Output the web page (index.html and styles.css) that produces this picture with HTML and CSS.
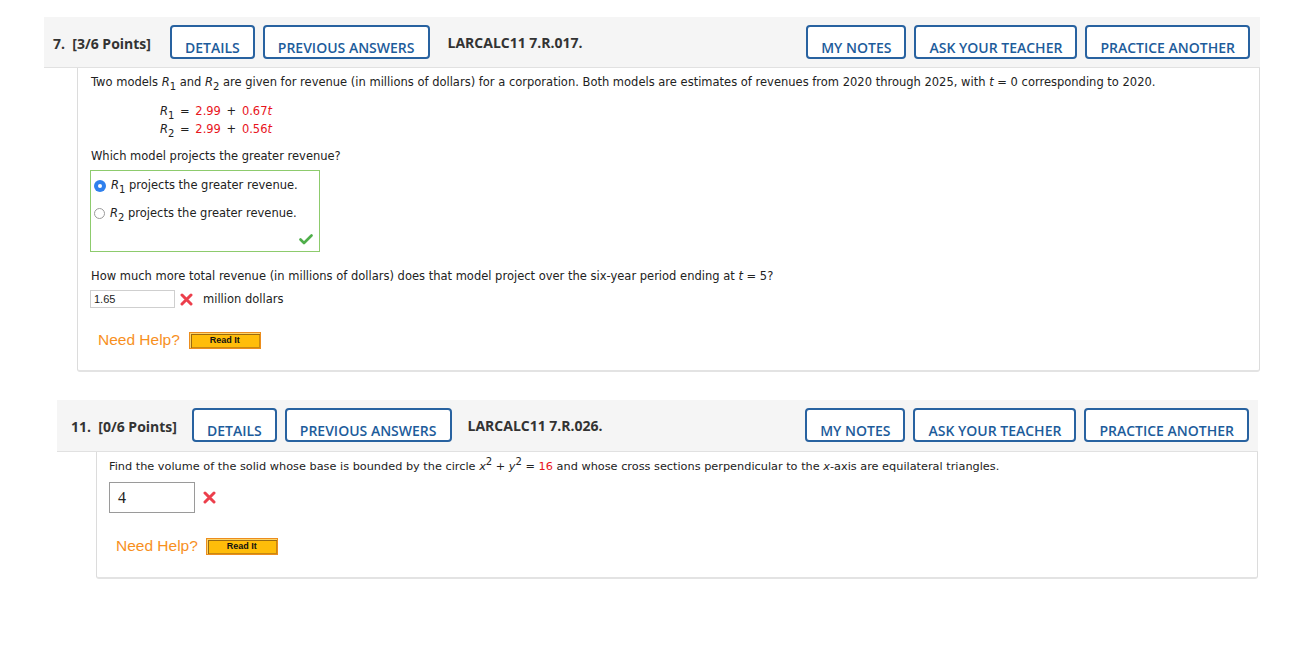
FILE: index.html
```html
<!DOCTYPE html>
<html>
<head>
<meta charset="utf-8">
<link rel="stylesheet" href="styles.css">
</head>
<body>
<div class="question q7">
  <div class="qhead">
    <span class="qlabel">7.&nbsp;&nbsp;[3/6 Points]</span>
    <span class="btn">DETAILS</span>
    <span class="btn">PREVIOUS ANSWERS</span>
    <span class="qcode">LARCALC11 7.R.017.</span>
    <span class="spacer"></span>
    <span class="btn">MY NOTES</span>
    <span class="btn">ASK YOUR TEACHER</span>
    <span class="btn">PRACTICE ANOTHER</span>
  </div>
  <div class="qbody body7">
    <p class="line">Two models <i>R</i><sub>1</sub> and <i>R</i><sub>2</sub> are given for revenue (in millions of dollars) for a corporation. Both models are estimates of revenues from 2020 through 2025, with <i>t</i> = 0 corresponding to 2020.</p>
    <div class="formulas">
      <div class="fl"><i>R</i><sub>1</sub> = <span class="red">2.99</span> + <span class="red">0.67<i>t</i></span></div>
      <div class="fl"><i>R</i><sub>2</sub> = <span class="red">2.99</span> + <span class="red">0.56<i>t</i></span></div>
    </div>
    <p class="line q-which">Which model projects the greater revenue?</p>
    <div class="choices">
      <div class="choice"><span class="radio on"></span><span><i>R</i><sub>1</sub> projects the greater revenue.</span></div>
      <div class="choice"><span class="radio"></span><span><i>R</i><sub>2</sub> projects the greater revenue.</span></div>
      <svg class="check" width="14" height="11" viewBox="0 0 14 11"><path d="M1.5 5.5 L5 9 L12.5 1.5" fill="none" stroke="#4fae4a" stroke-width="2.6" stroke-linecap="round" stroke-linejoin="round"/></svg>
    </div>
    <p class="line q-how">How much more total revenue (in millions of dollars) does that model project over the six-year period ending at <i>t</i> = 5?</p>
    <div class="answer-row">
      <span class="input small">1.65</span>
      <svg class="xmark" width="13" height="13" viewBox="0 0 13 13"><path d="M2 2 L11 11 M11 2 L2 11" stroke="#ec3f4c" stroke-width="3" stroke-linecap="round"/></svg>
      <span class="unit">million dollars</span>
    </div>
    <div class="help help7">
      <span class="need">Need Help?</span>
      <span class="readit">Read It</span>
    </div>
  </div>
</div>

<div class="question q11">
  <div class="qhead">
    <span class="qlabel">11.&nbsp;&nbsp;[0/6 Points]</span>
    <span class="btn">DETAILS</span>
    <span class="btn">PREVIOUS ANSWERS</span>
    <span class="qcode">LARCALC11 7.R.026.</span>
    <span class="spacer"></span>
    <span class="btn">MY NOTES</span>
    <span class="btn">ASK YOUR TEACHER</span>
    <span class="btn">PRACTICE ANOTHER</span>
  </div>
  <div class="qbody body11">
    <p class="line">Find the volume of the solid whose base is bounded by the circle <i>x</i><sup>2</sup> + <i>y</i><sup>2</sup> = <span class="red">16</span> and whose cross sections perpendicular to the <i>x</i>-axis are equilateral triangles.</p>
    <div class="answer-row row11">
      <span class="input big">4</span>
      <svg class="xmark" width="13" height="13" viewBox="0 0 13 13"><path d="M2 2 L11 11 M11 2 L2 11" stroke="#ec3f4c" stroke-width="3" stroke-linecap="round"/></svg>
    </div>
    <div class="help help11">
      <span class="need">Need Help?</span>
      <span class="readit">Read It</span>
    </div>
  </div>
</div>
</body>
</html>
```

FILE: styles.css
```css
html, body {
  margin: 0;
  padding: 0;
  background: #ffffff;
}

body {
  font-family: "DejaVu Sans", Verdana, sans-serif;
  font-size: 11px;
  color: #222;
}

.question {
  display: flex;
  flex-direction: column;
}

.q7 {
  margin: 17px 0 0 44px;
  width: 1216px;
}

.q11 {
  margin: 28px 0 0 57px;
  width: 1201px;
}

.qhead {
  display: flex;
  align-items: center;
  gap: 8px;
  height: 51px;
  box-sizing: border-box;
  padding: 8px 10px 9px 9px;
  background: #f5f5f5;
  border-bottom: 1px solid #e1e1e1;
  font-family: "Open Sans", sans-serif;
}

.q11 .qhead {
  height: 52px;
  padding: 8px 9px 9px 14px;
}

.qlabel {
  font-weight: 700;
  font-size: 14px;
  color: #333;
  margin-right: 11px;
  padding-top: 3px;
}

.q11 .qlabel {
  margin-right: 7px;
}

.qcode {
  font-weight: 700;
  font-size: 14px;
  color: #333;
  margin-left: 10px;
  padding-top: 1px;
}

.q11 .qcode {
  margin-left: 8px;
}

.spacer {
  flex: 1;
}

.btn {
  display: flex;
  align-items: flex-end;
  height: 34px;
  box-sizing: border-box;
  padding: 0 13px 0;
  border: 2px solid #2862a0;
  border-radius: 4px;
  background: #fff;
  color: #1d5c9b;
  font-size: 14px;
  font-weight: 600;
  line-height: 18px;
}

.qbody {
  background: #fff;
  border: 1px solid #dcdcdc;
  border-top: none;
  border-bottom: 2px solid #e3e3e3;
  border-radius: 0 0 3px 3px;
  display: flex;
  flex-direction: column;
  align-items: flex-start;
}

.body7 {
  margin-left: 33px;
  height: 304px;
  box-sizing: border-box;
  padding: 7px 0 0 13px;
  font-size: 11.5px;
}

.body11 {
  margin-left: 39px;
  height: 127px;
  box-sizing: border-box;
  padding: 7px 0 0 12px;
  font-size: 11.3px;
}

.line {
  margin: 0;
  line-height: 15px;
  white-space: nowrap;
}

sub, sup {
  font-size: 10px;
  line-height: 0;
}

sub {
  vertical-align: -4px;
}

sup {
  vertical-align: 5px;
}

.red {
  color: #e8141c;
}

.formulas {
  margin: 12px 0 0 69px;
  display: flex;
  flex-direction: column;
}

.fl {
  line-height: 18px;
  word-spacing: 2px;
}

.q-which {
  margin-top: 11px;
}

.choices {
  position: relative;
  margin: 6px 0 0 -1px;
  width: 230px;
  height: 82px;
  box-sizing: border-box;
  border: 1px solid #8dcb6d;
  padding: 7px 0 0 3px;
  display: flex;
  flex-direction: column;
  gap: 13px;
}

.choice {
  display: flex;
  align-items: center;
  gap: 5px;
  line-height: 15px;
}

.radio {
  width: 11px;
  height: 11px;
  box-sizing: border-box;
  border-radius: 50%;
  border: 1px solid #9a9a9a;
  background: #fff;
  display: inline-flex;
  align-items: center;
  justify-content: center;
}

.radio.on {
  width: 12px;
  height: 12px;
  border: none;
  background: #2f80ed;
}

.radio.on::after {
  content: "";
  width: 4px;
  height: 4px;
  border-radius: 50%;
  background: #fff;
}

.check {
  position: absolute;
  right: 6px;
  bottom: 6px;
}

.q-how {
  margin-top: 17px;
}

.answer-row {
  display: flex;
  align-items: center;
  margin: 6px 0 0 -1px;
}

.input {
  display: flex;
  align-items: center;
  box-sizing: border-box;
  background: #fff;
}

.input.small {
  width: 85px;
  height: 18px;
  border: 1px solid #cfcfcf;
  padding-left: 3px;
  font-family: "Liberation Sans", Arial, sans-serif;
  font-size: 11px;
  color: #222;
}

.answer-row .xmark {
  margin-left: 5px;
}

.unit {
  margin-left: 10px;
}

.help {
  display: flex;
  align-items: center;
  gap: 9px;
}

.help7 {
  margin: 23px 0 0 7px;
}

.help11 {
  margin: 24px 0 0 7px;
  gap: 8px;
}

.need {
  font-family: "Liberation Sans", Arial, sans-serif;
  font-size: 15.5px;
  color: #f7901e;
}

.readit {
  display: flex;
  align-items: center;
  justify-content: center;
  width: 72px;
  height: 17px;
  box-sizing: border-box;
  background: #ffbd0a;
  border: 1px solid #ec8d1d;
  box-shadow: inset 1px 1px 0 #fbd46a, inset 2px 2px 0 #9a6a10, inset -1px -1px 0 #c98a10;
  font-family: "Liberation Sans", Arial, sans-serif;
  font-size: 9px;
  font-weight: 700;
  color: #111;
}

.row11 {
  margin: 8px 0 0 0;
}

.input.big {
  width: 86px;
  height: 31px;
  border: 1px solid #9a9a9a;
  padding-left: 8px;
  font-family: "Liberation Serif", "Times New Roman", serif;
  font-size: 16px;
  color: #222;
}

.row11 .xmark {
  margin-left: 8px;
}
```
